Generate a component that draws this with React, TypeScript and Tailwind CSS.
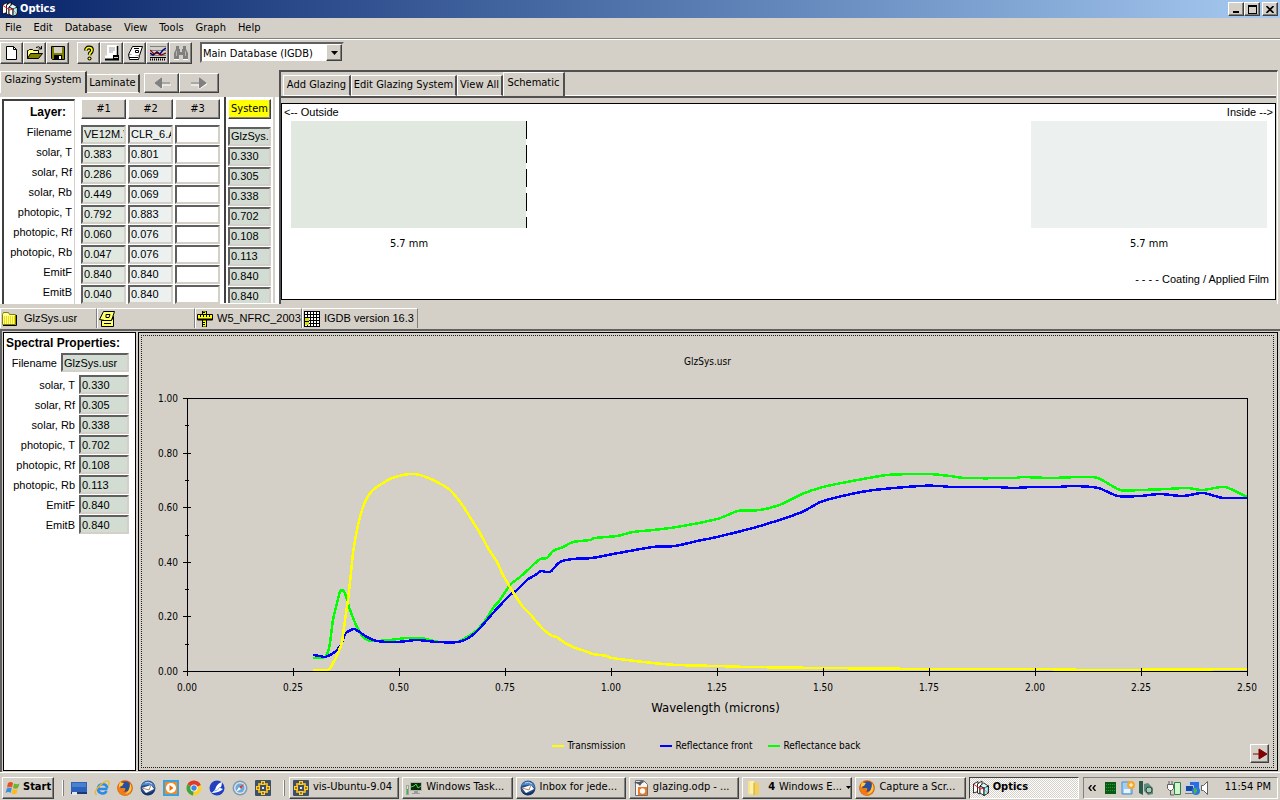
import { useState } from 'react';
import type { ReactNode } from 'react';

const UI_FONT = "font-['DejaVu_Sans_Condensed','DejaVu_Sans',sans-serif]";
const MS_FONT = "font-['Liberation_Sans',Arial,sans-serif]";
const RAISED =
  'border border-t-white border-l-white border-r-[#404040] border-b-[#404040] shadow-[inset_-1px_-1px_0_#808080]';
const SUNKEN =
  'border-2 border-t-[#606060] border-l-[#606060] border-r-[#d4d0c8] border-b-[#d4d0c8]';

const menus = ['File', 'Edit', 'Database', 'View', 'Tools', 'Graph', 'Help'];
const rowLabels = [
  'Filename',
  'solar, T',
  'solar, Rf',
  'solar, Rb',
  'photopic, T',
  'photopic, Rf',
  'photopic, Rb',
  'EmitF',
  'EmitB',
];

const layers = [
  { name: '#1', tint: 'bg-[#e0e8e0]', values: ['VE12M.VIR', '0.383', '0.286', '0.449', '0.792', '0.060', '0.047', '0.840', '0.040'] },
  { name: '#2', tint: 'bg-[#ecf1f0]', values: ['CLR_6.AFG', '0.801', '0.069', '0.069', '0.883', '0.076', '0.076', '0.840', '0.840'] },
  { name: '#3', tint: 'bg-white', values: ['', '', '', '', '', '', '', '', ''] },
];
const systemValues = ['GlzSys.usr', '0.330', '0.305', '0.338', '0.702', '0.108', '0.113', '0.840', '0.840'];

const Svg = ({ children, className = 'w-4 h-4' }: { children: ReactNode; className?: string }) => (
  <svg viewBox="0 0 16 16" className={`${className} shrink-0`} aria-hidden="true">
    {children}
  </svg>
);

/* ---------- icons ---------- */

const OpticsIcon = () => (
  <Svg>
    <g stroke="#000" strokeWidth=".8">
      <path d="M.5 4L5 1.500v10L.5 13z" fill="#fff" />
      <path d="M4.500 4L9 1v4L7 6v8l-2.500-1z" fill="#fff" />
      <path d="M7 6l4 2v7.500L7 13z" fill="#fff" />
      <path d="M11 8l4.500-2v7L11 15.500z" fill="#6fe4f0" />
      <path d="M7 6l3.500-3L15.500 6 11 8z" fill="#d8fbff" />
    </g>
    <path d="M1 4.500L7.500 9l3.500-1" fill="none" stroke="#f00" strokeWidth=".9" />
    <path d="M11.500 9.500l3.500 4" stroke="#f00" strokeWidth=".9" />
    <path d="M13 7v7" stroke="#fff" strokeWidth=".9" />
  </Svg>
);

const NewIcon = () => (
  <Svg>
    <path d="M2.500 1.500h7l3 3v10h-10z" fill="#fff" stroke="#000" />
    <path d="M9.500 1.500v3h3" fill="none" stroke="#000" />
  </Svg>
);

const OpenIcon = () => (
  <Svg>
    <path d="M.5 13.500v-8h1l1-1h3l1 1h5v3" fill="#ffff80" stroke="#000" />
    <path d="M.5 13.500l3-5h12l-4 5z" fill="#808000" stroke="#000" />
    <path d="M9 2.500q3-2 5 1M14.500 1v3h-3" fill="none" stroke="#000" />
  </Svg>
);

const SaveIcon = () => (
  <Svg>
    <path d="M1.500 1.500h13v13h-12l-1-1z" fill="#808000" stroke="#000" />
    <path d="M4 2h8v6H4z" fill="#d4d0c8" />
    <path d="M4 10h8v5H4z" fill="#000" />
    <path d="M9 11h2v3H9z" fill="#fff" />
  </Svg>
);

const HelpIcon = () => (
  <Svg>
    <path d="M5 5.500q0-3 3-3t3 2.500q0 2-2 3.300l-.5 1.700" fill="none" stroke="#000" strokeWidth="3.800" />
    <circle cx="8.500" cy="13.500" r="2" fill="#000" />
    <path d="M5 5.500q0-3 3-3t3 2.500q0 2-2 3.300l-.5 1.700" fill="none" stroke="#ff0" strokeWidth="1.700" />
    <circle cx="8.500" cy="13.500" r="1.100" fill="#ff0" />
  </Svg>
);

const ReportIcon = () => (
  <Svg>
    <path d="M3 0h10v11H3z" fill="#fff" />
    <path d="M5 3h6M5 5h6M5 7h4" stroke="#a0a0a0" />
    <path d="M13.500 1v11" stroke="#000" strokeWidth="1.500" />
    <path d="M1 15.500h14V10H9v3H1z" fill="#000" />
    <path d="M1 10.500h8v3H1z" fill="#fff" />
    <path d="M10 12.500h4" stroke="#d4d0c8" />
  </Svg>
);

const NotesIcon = () => (
  <Svg>
    <path d="M5.500 1.500h10l-3 9h-7l-4-1z" fill="#fff" stroke="#000" />
    <path d="M1.500 9.500l1 5h9l1-4" fill="#fff" stroke="#000" />
    <path d="M2 12.500h9" stroke="#000" />
    <path d="M7 3.500h5M8.500 5.500h3v2h-3z" fill="none" stroke="#000" />
  </Svg>
);

const GraphIcon = () => (
  <Svg>
    <path d="M0 1.500h16M0 5.500h16M0 10.500h16" stroke="#808080" />
    <path d="M0 8l3 2 4-3 3 2 3-4 3-2" fill="none" stroke="#000080" strokeWidth="1.500" />
    <path d="M0 5l4 4 3-1 4 2 5-2" fill="none" stroke="#800000" strokeWidth="1.200" />
    <path d="M0 12.500h16" stroke="#000" />
    <path d="M0 14.500h16" stroke="#000" strokeWidth="2" strokeDasharray="1 1" />
  </Svg>
);

const FindIcon = () => (
  <Svg>
    <path d="M3 1h3v3h1v3h2V4h1V1h3v3l2 4v6h-5v-4H6v4H1V8l2-4z" fill="#808080" />
    <path d="M3.500 6v5M12.500 6v5" stroke="#b8b4ac" />
    <path d="M1 14.500h5M10 14.500h5" stroke="#fff" />
  </Svg>
);

const FolderIcon = () => (
  <Svg>
    <path d="M.5 13.500v-10l1-2h5l1 2h6v10z" fill="#ffffa0" stroke="#808000" />
    <path d="M2.500 5v8M4.500 5v8M6.500 5v8M8.500 5v8M10.500 5v8M12.500 5v8" stroke="#f0e000" />
    <path d="M1 14.500h13.500V4" fill="none" stroke="#000" />
  </Svg>
);

const YellowNoteIcon = () => (
  <Svg>
    <path d="M4.500.5h11l-3 9h-7l-5-1z" fill="#ff6" stroke="#000" />
    <path d="M2.500 9.500v6h12v-10l-2 4z" fill="#ff6" stroke="#000" />
    <path d="M7 3.500h4l-1 3H7zM5 12.500h7" fill="none" stroke="#000" />
  </Svg>
);

const RulerIcon = () => (
  <Svg>
    <path d="M5.500 0v16h4V0z" fill="#ff0" stroke="#000" />
    <path d="M.5 3.500h15v5H.5z" fill="#ff0" stroke="#000" />
    <path d="M.5 8.500h15" stroke="#000" strokeWidth="2" />
    <path d="M3.500 4v2M6.500 4v2M9.500 4v2M12.500 4v2M6 11.500h2M6 13.500h2M6 1.500h2" stroke="#000" />
  </Svg>
);

const TableIcon = () => (
  <Svg>
    <path d="M0 0h16v16H0z" fill="#000" />
    <path d="M1 2h14M1 5h14M1 8h14M1 11h14M1 14h14" stroke="#fff" strokeWidth="2" strokeDasharray="2 1" />
    <path d="M1 7h4v7H1z" fill="#e0e000" />
    <path d="M1 10.500h4" stroke="#000" />
  </Svg>
);

const FlagIcon = () => (
  <Svg>
    <path d="M3 3q3-2 5 0L7 7.500q-2-1.500-5 0z" fill="#e8501c" />
    <path d="M9 3.500q3 1.500 5.500 0L13 8q-3 1.500-5 0z" fill="#6cb52d" />
    <path d="M1.800 8.500q3-2 5 0L5.500 13q-2-2-5 0z" fill="#3a8ee0" />
    <path d="M7.800 9q3 1.500 5 0l-1.300 4.500q-3 1.500-5 0z" fill="#fbbc1b" />
  </Svg>
);

const DesktopIcon = () => (
  <Svg>
    <path d="M0 2h16v12H0z" fill="#2d62b8" />
    <path d="M1 3h14v4H1z" fill="#4a80d0" />
    <path d="M0 12h16v2H0z" fill="#183878" />
    <path d="M1 12h5v3H1z" fill="#e8e8e8" />
  </Svg>
);

const IeIcon = () => (
  <Svg>
    <path d="M13.500 9H4A4.500 4.500 0 0 0 12.500 11M4 8.500A4.700 4.700 0 0 1 13.300 8" fill="none" stroke="#2b8be6" strokeWidth="2.600" />
    <path d="M2.500 15Q-1 12 6 5.500T14.500 1.500q1.500 2-.5 4" fill="none" stroke="#f0b81e" strokeWidth="1.300" />
  </Svg>
);

const FirefoxIcon = () => (
  <Svg>
    <circle cx="8" cy="8" r="7.800" fill="#d85400" />
    <circle cx="8.500" cy="6.500" r="5" fill="#27509c" />
    <path d="M1 5q1 4 4 3l3 0q1 3-2 4 6 1 7-5l1-3q3 8-4 11.500Q2 16 .7 9z" fill="#f07c18" />
    <path d="M3 2q2 1 4 1L5 6q-2 0-3 2-1-3 1-6z" fill="#ffc93c" />
    <path d="M13 3q3 5 0 9-2 2-5 2 5-3 5-11z" fill="#ffc93c" />
  </Svg>
);

const ThunderbirdIcon = () => (
  <Svg>
    <circle cx="8" cy="8" r="7.500" fill="#2b4f8c" />
    <path d="M2 8l9-3 3 4-8 4z" fill="#fff" />
    <path d="M2 8l7 2 2-5" fill="none" stroke="#b08860" />
    <path d="M1 6q3-6 9-4 4 1 5 6-4-4-8-3-4 0-6 1z" fill="#4f86c8" />
    <path d="M5 3q4-2 7 1" fill="none" stroke="#b8d8f8" />
    <path d="M1 10q3 4 8 3 4-1 6-4-1 5-6 6-6 1-8-5z" fill="#16305e" />
  </Svg>
);

const MediaIcon = () => (
  <Svg>
    <path d="M0 0h16v16H0z" fill="#38a3e4" />
    <path d="M2 2h12v12H2z" fill="#f58a1f" />
    <circle cx="8" cy="8" r="5" fill="#fff" />
    <path d="M6.500 5l4 3-4 3z" fill="#f06a00" />
  </Svg>
);

const ChromeIcon = () => (
  <Svg>
    <circle cx="8" cy="8" r="7.500" fill="#fbd12c" />
    <path d="M8 8L1.500 4.200A7.500 7.500 0 0 1 14.800 5z" fill="#e0382b" />
    <path d="M8 8L1.500 4.200A7.500 7.500 0 0 0 7 15.400z" fill="#3fa447" />
    <circle cx="8" cy="8" r="3.600" fill="#fff" />
    <circle cx="8" cy="8" r="2.700" fill="#3f85e6" />
  </Svg>
);

const BirdIcon = () => (
  <Svg>
    <circle cx="8" cy="8" r="7.500" fill="#2040c0" />
    <path d="M2 13q4-2 5-6 2-4 6-5 0 4-2 6l3 1q-4 4-12 4z" fill="#fff" />
    <path d="M5 11q4 0 6-4" fill="none" stroke="#8fb6ff" />
  </Svg>
);

const SafariIcon = () => (
  <Svg>
    <circle cx="8" cy="8" r="7.500" fill="#8899a8" />
    <circle cx="8" cy="8" r="6" fill="#d0e4f4" />
    <circle cx="8" cy="8" r="4.500" fill="#6ba8dc" />
    <path d="M12 4L9 9 7 7z" fill="#e03c28" />
    <path d="M4 12l3-5 2 2z" fill="#fff" />
  </Svg>
);

const VmIcon = () => (
  <Svg>
    <rect width="16" height="16" rx="1" fill="#3d5068" />
    <rect x="4" y="4" width="8" height="8" fill="none" stroke="#f5b914" strokeWidth="1.800" />
    <path d="M6 1h4v4H6zM6 11h4v4H6zM1 6h4v4H1zM11 6h4v4h-4z" fill="#ffd034" />
    <path d="M7 2h2v2H7zM7 12h2v2H7zM2 7h2v2H2zM12 7h2v2h-2z" fill="#a87808" />
    <path d="M7 7h2v2H7z" fill="#dfe6ee" />
  </Svg>
);

const TaskMgrIcon = () => (
  <Svg>
    <path d="M.5 5.500h2v9h-2z" fill="#d8e8d8" stroke="#708070" strokeWidth=".6" />
    <path d="M1 9h1v5H1z" fill="#30c030" />
    <path d="M4 2h12v9H4z" fill="#b0b4b0" />
    <path d="M5 3h10v7H5z" fill="#102810" />
    <path d="M5 7l3-1 2-2 2 4 3-2" fill="none" stroke="#3ee03e" />
    <path d="M8 11h4v2h2v1H6v-1h2z" fill="#9a9e9a" />
  </Svg>
);

const DocIcon = () => (
  <Svg>
    <path d="M2.500.5h8l4 4v11h-12z" fill="#f6f6f6" stroke="#707070" />
    <path d="M1 3q3-2 5-1 3-2 6 0-3 0-5 4-2-3-6-3z" fill="#505860" />
    <path d="M5 7h9v8H5z" fill="#f07820" />
    <circle cx="9.500" cy="11" r="2.700" fill="#fff" />
  </Svg>
);

const ExplorerIcon = () => (
  <Svg>
    <path d="M2 1l5 1v13l-5-1z" fill="#f8e48a" />
    <path d="M7 2l6 1v12H7z" fill="#f0cf5c" />
    <path d="M4 1h4v13l-4-1z" fill="#fff0a8" />
    <path d="M8 3v12" stroke="#d0a838" />
  </Svg>
);

const ArrowGlyph = ({ flip = false }: { flip?: boolean }) => (
  <svg viewBox="0 0 18 12" className="h-3 w-[18px]" aria-hidden="true">
    {flip ? (
      <>
        <path d="M9 12V8h9" fill="none" stroke="#fff" />
        <path d="M17 6H8M8.500 1L2 6l6.500 5z" fill="#808080" stroke="#808080" />
      </>
    ) : (
      <>
        <path d="M1 8h8v4l8-5" fill="none" stroke="#fff" />
        <path d="M1 6h8M9.500 1L16 6l-6.500 5z" fill="#808080" stroke="#808080" />
      </>
    )}
  </svg>
);

/* ---------- building blocks ---------- */

const toolGroups = [
  [
    { label: 'New', icon: <NewIcon /> },
    { label: 'Open', icon: <OpenIcon /> },
    { label: 'Save', icon: <SaveIcon /> },
  ],
  [
    { label: 'Help', icon: <HelpIcon /> },
    { label: 'Report', icon: <ReportIcon /> },
    { label: 'Notes', icon: <NotesIcon /> },
    { label: 'Graph', icon: <GraphIcon /> },
    { label: 'Find', icon: <FindIcon /> },
  ],
];

const Field = ({ id, label, value, tint, className = '' }: { id?: string; label?: string; value: string; tint: string; className?: string }) => (
  <input
    id={id}
    aria-label={label}
    readOnly
    value={value}
    className={`${SUNKEN} ${MS_FONT} ${tint} ${className} mb-px h-[19px] shrink-0 rounded-none pl-px text-[11px] leading-[15px] outline-none`}
  />
);

const TitleBar = () => (
  <header className="flex h-[18px] items-center bg-linear-to-r from-[#0a246a] to-[#a6caf0] px-0.5 text-white">
    <OpticsIcon />
    <h1 className="ml-0.5 flex-1 text-[11px] font-bold">Optics</h1>
    <button aria-label="Minimize" className={`${RAISED} flex h-3.5 w-4 items-end justify-center bg-[#d4d0c8] pb-0.5`}>
      <span className="h-0.5 w-1.5 bg-black" />
    </button>
    <button aria-label="Maximize" className={`${RAISED} flex h-3.5 w-4 items-center justify-center bg-[#d4d0c8]`}>
      <span className="h-[9px] w-[9px] border border-t-2 border-black" />
    </button>
    <button aria-label="Close" className={`${RAISED} ml-0.5 flex h-3.5 w-4 items-center justify-center bg-[#d4d0c8]`}>
      <svg viewBox="0 0 8 7" className="h-[7px] w-2" aria-hidden="true">
        <path d="M.5 0l7 7M7.500 0l-7 7" stroke="#000" strokeWidth="1.600" />
      </svg>
    </button>
  </header>
);

const Toolbar = () => (
  <div className="flex h-[30px] items-start gap-2 pt-0.5">
    {toolGroups.map((group, i) => (
      <div key={i} className="flex">
        {group.map((tool) => (
          <button key={tool.label} aria-label={tool.label} className={`${RAISED} flex h-[22px] w-[23px] items-center justify-center`}>
            {tool.icon}
          </button>
        ))}
      </div>
    ))}
    <div className={`${SUNKEN} relative flex h-[21px] w-36 bg-white`}>
      <select aria-label="Database" className="w-full appearance-none bg-white pt-0.5 pl-px text-[11px] leading-[15px] outline-none">
        <option>Main Database (IGDB)</option>
      </select>
      <span className={`${RAISED} pointer-events-none absolute inset-y-0 right-0 flex w-4 items-center justify-center bg-[#d4d0c8]`}>
        <svg viewBox="0 0 7 4" className="h-1 w-[7px]" aria-hidden="true">
          <path d="M0 0h7L3.500 4z" />
        </svg>
      </span>
    </div>
  </div>
);

const LayerPanel = () => (
  <section className="flex w-[279px] shrink-0 flex-col">
    <div className="flex h-[23px] items-end">
      <button className="h-[22px] w-[87px] border-l border-t border-r-2 border-l-white border-t-white border-r-[#404040] pb-1 text-[11px] whitespace-nowrap">
        Glazing System
      </button>
      <button className="h-[19px] w-[53px] border-t border-r-2 border-b border-t-white border-r-[#404040] border-b-white text-[11px] whitespace-nowrap">
        Laminate
      </button>
      <button aria-label="Previous layer" className={`${RAISED} ml-1 flex h-5 w-[35px] items-center justify-center`}>
        <ArrowGlyph flip />
      </button>
      <button aria-label="Next layer" className={`${RAISED} flex h-5 w-10 items-center justify-center`}>
        <ArrowGlyph />
      </button>
    </div>
    <div className="mt-1 flex h-[209px] items-start overflow-hidden bg-white pl-0.5 pt-0.5">
      <div className="flex h-[206px] w-[73px] flex-col border border-t-2 border-l-2 border-t-[#404040] border-l-[#404040] border-r-[#d4d0c8] border-b-[#d4d0c8] pr-0.5 text-right">
        <strong className={`${MS_FONT} pt-px pr-1.5 text-[12px] leading-5`}>Layer:</strong>
        {rowLabels.map((label) => (
          <span key={label} className={`${MS_FONT} text-[11px] leading-5`}>{label}</span>
        ))}
      </div>
      <div className="flex gap-0.5 pl-1.5">
        {layers.map((layer) => (
          <div key={layer.name} className="flex w-[45px] flex-col">
            <button className={`${RAISED} mb-1.5 h-5 bg-[#d4d0c8] text-[11px]`}>{layer.name}</button>
            {layer.values.map((value, i) => (
              <Field key={i} label={`${layer.name} ${rowLabels[i]}`} value={value} tint={layer.tint} className="w-full" />
            ))}
          </div>
        ))}
      </div>
      <div className="-mt-1 ml-1 flex h-[208px] w-[51px] flex-col overflow-hidden border-t-2 border-r-2 border-l-2 border-t-[#404040] border-r-[#d4d0c8] border-l-[#404040] px-0.5 pt-0.5">
        <button className={`${RAISED} mb-2 h-5 shrink-0 bg-[#ffff00] text-[11px]`}>System</button>
        {systemValues.map((value, i) => (
          <Field key={i} label={`System ${rowLabels[i]}`} value={value} tint="bg-[#d3dcd3]" className="w-full" />
        ))}
      </div>
    </div>
  </section>
);

const viewTabs = [
  { label: 'Add Glazing', width: 'w-[68px]' },
  { label: 'Edit Glazing System', width: 'w-[106px]' },
  { label: 'View All', width: 'w-[46px]' },
  { label: 'Schematic', width: 'w-[62px]' },
];

const Pane = ({ tint, coated = false }: { tint: string; coated?: boolean }) => (
  <figure className="w-[236px]">
    <div className="flex h-[107px]">
      <div className={`flex-1 ${tint}`} />
      {coated && (
        <div className="w-px bg-[repeating-linear-gradient(180deg,#000_0_18px,#fff_18px_24px)]" />
      )}
    </div>
    <figcaption className="pt-2 text-center text-[11px] leading-4">5.7 mm</figcaption>
  </figure>
);

const SchematicPanel = () => {
  const [active, setActive] = useState('Schematic');
  return (
    <section className="mr-0.5 flex min-w-0 flex-1 flex-col border-t-2 border-l-2 border-r border-t-[#505050] border-l-[#505050] border-r-white">
      <div role="tablist" className="mr-px flex h-[26px] items-end border-b-2 border-[#505050] pl-0.5">
        {viewTabs.map((tab) => (
          <button
            key={tab.label}
            role="tab"
            aria-selected={active === tab.label}
            onClick={() => setActive(tab.label)}
            className={`${tab.width} ${active === tab.label ? 'h-6 pb-0.5' : 'h-[21px] border-b border-b-white'} border-t border-l border-r-2 border-t-white border-l-white border-r-[#505050] text-[11px] whitespace-nowrap`}
          >
            {tab.label}
          </button>
        ))}
        <span className="h-px flex-1 bg-white" />
      </div>
      <div className="mt-[5px] mr-px flex h-[197px] flex-col border border-black bg-white">
        <div className={`${MS_FONT} flex justify-between px-0.5 text-[11px] leading-[17px]`}>
          <span>&lt;-- Outside</span>
          <span>Inside --&gt;</span>
        </div>
        <div className="flex justify-between pr-2 pl-[9px]">
          <Pane tint="bg-[#e0e8e0]" coated />
          <Pane tint="bg-[#ecf1f0]" />
        </div>
        <p className={`${MS_FONT} mt-auto pr-1.5 pb-3 text-right text-[11px] leading-4`}>- - - - Coating / Applied Film</p>
      </div>
    </section>
  );
};

const statusCells = [
  { icon: <FolderIcon />, text: 'GlzSys.usr', width: 'w-[97px]', gap: 'gap-1.5' },
  { icon: <YellowNoteIcon />, text: '', width: 'w-[98px]', gap: 'gap-1' },
  { icon: <RulerIcon />, text: 'W5_NFRC_2003', width: 'w-[107px]', gap: 'gap-1' },
  { icon: <TableIcon />, text: 'IGDB version 16.3', width: 'w-[116px]', gap: 'gap-1' },
];

const StatusBar = () => (
  <div className="mt-1 flex h-5">
    {statusCells.map((cell, i) => (
      <div key={i} className={`${cell.width} ${cell.gap} ${MS_FONT} flex items-center border-t border-l border-r border-t-white border-l-white border-r-[#808080] pl-px text-[11px] whitespace-nowrap`}>
        {cell.icon}
        <span>{cell.text}</span>
      </div>
    ))}
  </div>
);

const SpectralPanel = () => (
  <section className={`${MS_FONT} w-[133px] shrink-0 border border-black bg-white px-0.5 pt-px`}>
    <h2 className="pb-px text-[12px] font-bold leading-[18px]">Spectral Properties:</h2>
    {rowLabels.map((label, i) => (
      <div key={label} className={`flex items-start justify-end gap-1 pr-1 ${i === 0 ? 'mb-0.5' : ''}`}>
        <label htmlFor={`spectral-${i}`} className="text-[11px] leading-5">{label}</label>
        <Field
          id={`spectral-${i}`}
          value={systemValues[i]}
          tint="bg-[#d3dcd3]"
          className={i === 0 ? 'w-[68px]' : 'w-[50px]'}
        />
      </div>
    ))}
  </section>
);

/* ---------- chart ---------- */

const LEFT = 187;
const RIGHT = 1247;
const TOP = 398;
const BOTTOM = 671;

const series = [
  {
    name: 'Reflectance back',
    color: '#00ff00',
    points:
      '313,658 323,658 327,654 330,643 333,620 337,603 340,592 342,590 345,593 350,610 357,627 363,637 370,641 377,641 390,640 407,638 420,638 430,640 440,642 457,642 467,637 477,630 487,618 493,608 500,600 510,585 520,577 530,568 540,559 547,558 553,551 563,547 573,542 590,540 595,538 617,536 633,532 653,530 677,527 717,519 738,511 760,510 782,504 802,494 823,487 847,482 887,475 920,474 930,474 950,476 965,478 1013,478 1023,477 1050,478 1080,477 1098,478 1120,490 1140,490 1167,489 1187,488 1203,490 1225,487 1247,497',
  },
  {
    name: 'Reflectance front',
    color: '#0000ff',
    points:
      '313,655 320,656 325,657 332,654 337,650 342,643 345,634 353,629 358,631 367,637 377,641 397,642 417,640 437,642 458,642 470,637 480,628 493,613 510,595 517,590 527,580 537,574 541,571 550,572 560,562 573,559 592,558 613,554 653,547 675,546 697,541 717,537 760,526 802,512 823,501 867,491 920,486 940,486 952,487 980,487 997,487 1013,488 1033,487 1057,487 1073,486 1098,488 1118,496 1140,496 1160,494 1183,496 1203,493 1223,498 1247,498',
  },
  {
    name: 'Transmission',
    color: '#ffff00',
    points:
      '313,670 328,670 332,665 338,653 342,642 345,620 348,600 351,573 353,553 357,530 362,510 367,498 373,490 380,485 390,479 403,475 413,474 420,475 433,480 450,490 463,506 473,522 480,533 488,548 497,562 503,575 513,592 523,607 530,614 543,629 552,636 557,637 562,641 573,647 585,651 593,654 607,656 612,658 653,663 677,665 717,666 750,667 823,668 930,669 1035,669 1100,670 1247,669',
  },
];
const legend = [series[2], series[1], series[0]];

// Runs a soft curve through the sample points
const toPath = (points: string) => {
  const p = points.split(' ').map((pair) => pair.split(',').map(Number));
  let d = `M${p[0][0]} ${p[0][1]}`;
  for (let i = 0; i < p.length - 1; i++) {
    const a = p[i - 1] || p[i];
    const b = p[i];
    const c = p[i + 1];
    const e = p[i + 2] || c;
    d += `C${b[0] + (c[0] - a[0]) / 8} ${b[1] + (c[1] - a[1]) / 8} ${c[0] - (e[0] - b[0]) / 8} ${c[1] - (e[1] - b[1]) / 8} ${c[0]} ${c[1]}`;
  }
  return d;
};

const xTicks = Array.from({ length: 11 }, (_, i) => ({ x: LEFT + i * 106, label: (i * 0.25).toFixed(2) }));
const yTicks = Array.from({ length: 11 }, (_, i) => ({
  y: Math.round(BOTTOM - (i * (BOTTOM - TOP)) / 10),
  label: i % 2 === 0 ? (i / 10).toFixed(2) : '',
}));

const SpectralChart = () => (
  <section className="mr-0.5 ml-0.5 min-w-0 flex-1 border border-black py-0.5 pr-[3px] pl-0.5">
    <div className="relative flex h-full flex-col border border-dotted border-[#202020]">
      <h2 className="pt-[18px] text-center text-[10px] leading-4">GlzSys.usr</h2>
      <svg viewBox="142 370 1131 326" className="w-full" role="img" aria-label="Spectral curves of GlzSys.usr">
        <g stroke="#000" fill="none" shapeRendering="crispEdges">
          <path d={`M${LEFT + 0.5} ${BOTTOM + 0.5}V${TOP + 0.5}H${RIGHT + 0.5}V${BOTTOM + 0.5}`} />
        </g>
        {series.map((s) => (
          <path key={s.name} d={toPath(s.points)} fill="none" stroke={s.color} strokeWidth="2.500" shapeRendering="crispEdges" />
        ))}
        <g stroke="#000" shapeRendering="crispEdges">
          <path d={`M${LEFT} ${BOTTOM + 0.5}H${RIGHT}`} />
          {xTicks.map((t) => (
            <path key={t.label} d={`M${t.x + 0.5} ${BOTTOM - 3}v8`} />
          ))}
          {yTicks.map((t) => (
            <path key={t.y} d={t.label ? `M${LEFT - 4} ${t.y + 0.5}h8` : `M${LEFT - 2} ${t.y + 0.5}h4`} />
          ))}
        </g>
        <g className="text-[10px]">
          {xTicks.map((t) => (
            <text key={t.label} x={t.x} y={691} textAnchor="middle">{t.label}</text>
          ))}
          {yTicks.map((t) => (
            <text key={t.y} x={178} y={t.y + 4} textAnchor="end">{t.label}</text>
          ))}
        </g>
      </svg>
      <p className="pt-0.5 pl-4 text-center text-[13px] leading-5">Wavelength (microns)</p>
      <ul className="mt-5 flex justify-center pl-3 text-[10px] leading-4">
        {legend.map((s) => (
          <li key={s.name} className="flex w-[108px] items-center gap-1 whitespace-nowrap">
            <span className="h-0.5 w-3 shrink-0" style={{ backgroundColor: s.color }} />
            {s.name}
          </li>
        ))}
      </ul>
      <button aria-label="Next graph" className={`${RAISED} absolute right-1 bottom-1 flex h-[19px] w-[19px] items-center justify-center`}>
        <svg viewBox="0 0 16 12" className="h-3 w-4" aria-hidden="true">
          <path d="M1 6h6M7 1l8 5-8 5z" fill="#800000" stroke="#800000" />
        </svg>
      </button>
    </div>
  </section>
);

/* ---------- taskbar ---------- */

const quickLaunch = [
  { label: 'Show Desktop', icon: <DesktopIcon /> },
  { label: 'Internet Explorer', icon: <IeIcon /> },
  { label: 'Firefox', icon: <FirefoxIcon /> },
  { label: 'Thunderbird', icon: <ThunderbirdIcon /> },
  { label: 'Media Player', icon: <MediaIcon /> },
  { label: 'Chrome', icon: <ChromeIcon /> },
  { label: 'Sunbird', icon: <BirdIcon /> },
  { label: 'Safari', icon: <SafariIcon /> },
  { label: 'VMware', icon: <VmIcon /> },
];

const tasks = [
  { icon: <VmIcon />, text: 'vis-Ubuntu-9.04' },
  { icon: <TaskMgrIcon />, text: 'Windows Task...' },
  { icon: <ThunderbirdIcon />, text: 'Inbox for jede...' },
  { icon: <DocIcon />, text: 'glazing.odp - ...' },
  { icon: <ExplorerIcon />, text: 'Windows E...', count: 4 },
  { icon: <FirefoxIcon />, text: 'Capture a Scr...' },
  { icon: <OpticsIcon />, text: 'Optics', active: true },
];

const Separator = () => <span className="h-4 w-0.5 border-r border-l border-r-[#808080] border-l-white" />;

const Taskbar = () => (
  <footer className="flex h-7 shrink-0 items-center border-t border-white px-0.5 pt-0.5">
    <button className={`${RAISED} flex h-[22px] w-[52px] items-center gap-0.5 pl-0.5 text-[11px] font-bold`}>
      <FlagIcon />
      Start
    </button>
    <div className="flex w-[235px] shrink-0 items-center pl-2">
      <Separator />
      <div className="flex flex-1 justify-between pr-3 pl-[7px]">
        {quickLaunch.map((item) => (
          <button key={item.label} aria-label={item.label}>{item.icon}</button>
        ))}
      </div>
      <Separator />
      <span className="w-1" />
    </div>
    <div className="flex min-w-0 flex-1 gap-[3px]">
      {tasks.map((task) => (
        <button
          key={task.text}
          className={`flex h-[22px] min-w-0 flex-1 items-center gap-1 overflow-hidden pl-[3px] text-[11px] whitespace-nowrap ${
            task.active
              ? 'border border-t-[#404040] border-l-[#404040] border-r-white border-b-white bg-[repeating-conic-gradient(#fff_0_25%,#d4d0c8_0_50%)] bg-[length:2px_2px] font-bold'
              : RAISED
          }`}
        >
          {task.icon}
          {task.count && <b className="pl-0.5">{task.count}</b>}
          <span>{task.text}</span>
          {task.count && (
            <svg viewBox="0 0 5 3" className="mr-1 ml-auto h-[3px] w-[5px] shrink-0" aria-hidden="true">
              <path d="M0 0h5L2.500 3z" />
            </svg>
          )}
        </button>
      ))}
    </div>
    <div className="ml-1 flex h-[22px] w-[195px] items-center border border-t-[#808080] border-l-[#808080] border-r-white border-b-white pl-1 text-[11px]">
      <button aria-label="Show hidden icons" className="mr-1.5">
        <svg viewBox="0 0 8 6" className="h-1.5 w-2" aria-hidden="true">
          <path d="M3.500 0L1 3l2.500 3M7.500 0L5 3l2.500 3" fill="none" stroke="#000" strokeWidth="1.300" />
        </svg>
      </button>
      <Svg>
        <path d="M3 2h11v12H3z" fill="#0a5a14" />
        <path d="M4 4.500h9M4 7.500h9M4 10.500h9" stroke="#1fa030" strokeDasharray="1 1" />
      </Svg>
      <Svg className="ml-0.5 h-4 w-4">
        <path d="M2 2h10v12H2z" fill="#9fd0f4" stroke="#4a8cd0" />
        <circle cx="11" cy="5" r="4" fill="#f8a828" />
        <path d="M9 5h4M11 3v4" stroke="#fff" />
        <path d="M4 9h6v4H4z" fill="#e8f4ff" />
      </Svg>
      <Svg className="ml-0.5 h-4 w-4">
        <path d="M1 1h4v14l-4-2z" fill="#2a5c4c" />
        <path d="M6 4l4-1 5 5v6l-5 1-4-4z" fill="#5c8c7c" />
        <circle cx="11" cy="10" r="3" fill="#a8c8b8" stroke="#28483c" />
      </Svg>
      <Svg className="ml-3 h-4 w-4">
        <path d="M8.500 2.500h6v12h-6z" fill="#d0f8d0" stroke="#308040" />
        <path d="M1.500 4.500h6v4l-2 2h-2l-2-2z" fill="#fff" stroke="#606060" />
        <path d="M3 1v3M6 1v3M4.500 11v4H8" fill="none" stroke="#606060" />
      </Svg>
      <Svg className="ml-0.5 h-4 w-4">
        <path d="M5.500 1.500h10v7h-10z" fill="#2c6ce0" stroke="#c0d0e8" />
        <path d="M1.500 5.500h8v6h-8z" fill="#1848a8" stroke="#c0d0e8" />
        <path d="M1 13h9v1H1z" fill="#707880" />
        <circle cx="12" cy="11" r="4" fill="#2c78d8" />
        <path d="M10 8q3 0 3 3l-2 3q-2-2-1-6z" fill="#48b848" />
      </Svg>
      <svg viewBox="0 0 9 16" className="h-4 w-[9px] shrink-0" aria-hidden="true">
        <path d="M1.500 5.500h2l4-4v13l-4-4h-2z" fill="#fff" stroke="#606060" />
      </svg>
      <time className="ml-auto pr-1.5 whitespace-nowrap">11:54 PM</time>
    </div>
  </footer>
);

export default function App() {
  return (
    <div className={`${UI_FONT} flex min-h-screen flex-col bg-[#d4d0c8] text-black`}>
      <TitleBar />
      <nav className="flex h-[21px] items-center gap-3 border-b border-[#808080] pl-[5px] text-[11px]">
        {menus.map((menu) => (
          <button key={menu}>{menu}</button>
        ))}
      </nav>
      <div className="border-t border-white">
        <Toolbar />
      </div>
      <main className="flex flex-1 flex-col">
        <div className="flex h-[234px]">
          <LayerPanel />
          <SchematicPanel />
        </div>
        <StatusBar />
        <div className="mt-px flex flex-1 border-t-2 border-l-2 border-[#606060] py-px pl-px">
          <SpectralPanel />
          <SpectralChart />
        </div>
      </main>
      <Taskbar />
    </div>
  );
}
